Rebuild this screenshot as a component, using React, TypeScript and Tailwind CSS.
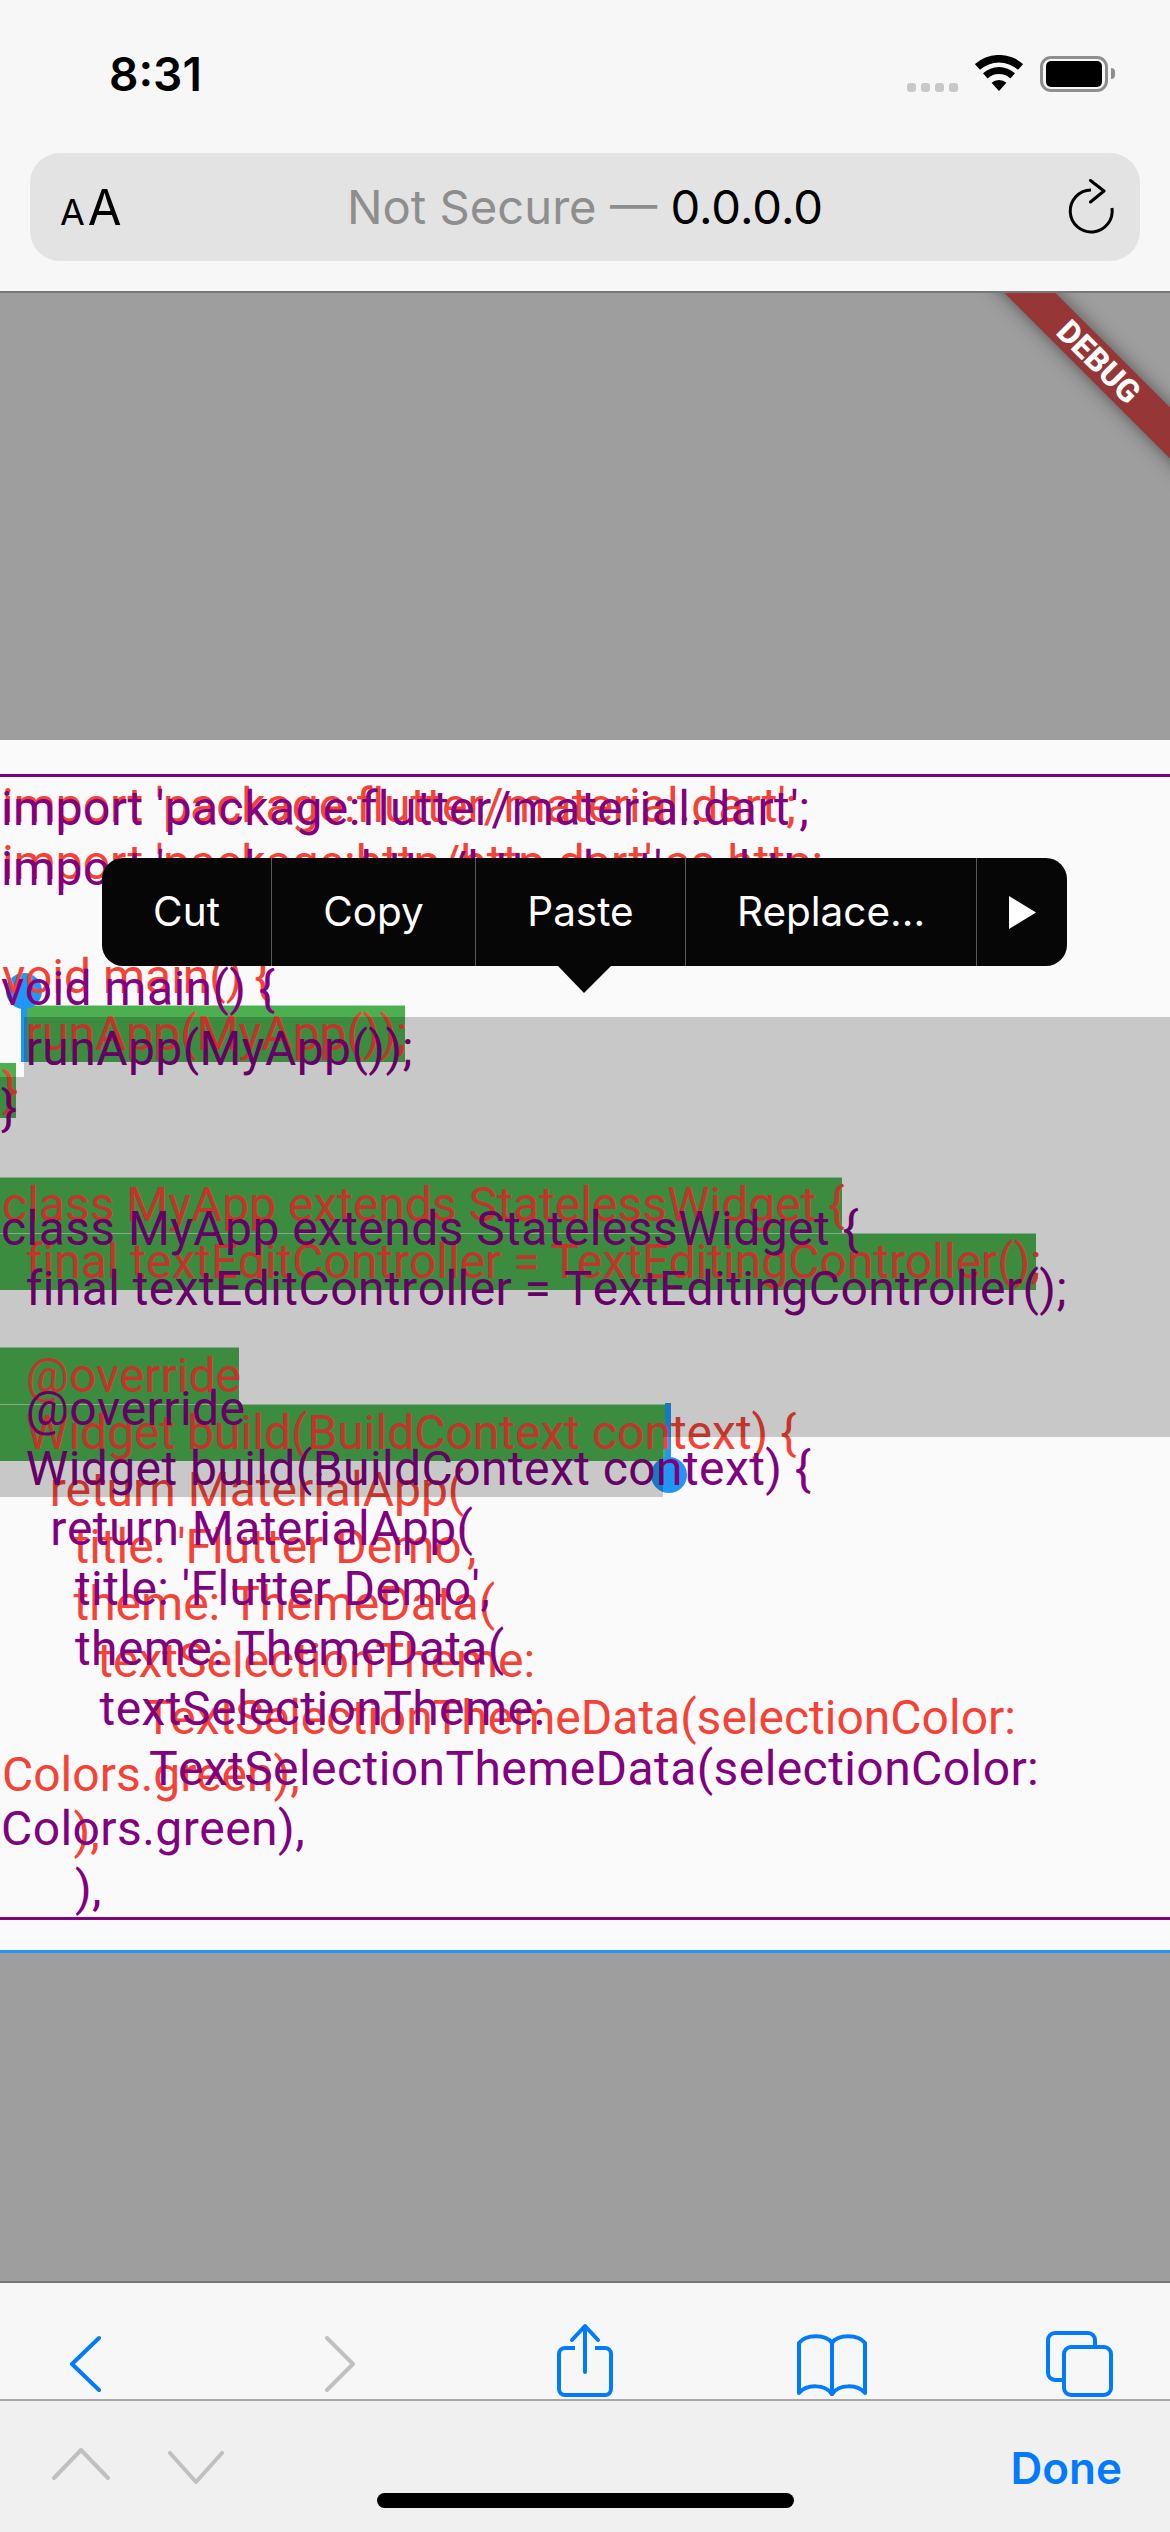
import React from "react";

// the same source is painted twice, the red copy sits under the purple one
const codeLines = [
  "import 'package:flutter/material.dart';",
  "import 'package:http/http.dart' as http;",
  " ",
  "void main() {",
  "  runApp(MyApp());",
  "}",
  " ",
  "class MyApp extends StatelessWidget {",
  "  final textEditController = TextEditingController();",
  " ",
  "  @override",
  "  Widget build(BuildContext context) {",
  "    return MaterialApp(",
  "      title: 'Flutter Demo',",
  "      theme: ThemeData(",
  "        textSelectionTheme:",
  "            TextSelectionThemeData(selectionColor:",
  "Colors.green),",
  "      ),"
];

const CodeLines: React.FC<{ className: string }> = ({ className }) => (
  <div className={className}>
    {codeLines.map((line, i) => (
      <div key={i} className="whitespace-pre">
        {line}
      </div>
    ))}
  </div>
);

const StatusBar = () => (
  <div className="flex h-[153px] items-end justify-between pb-[61px] pl-[109px] pr-[55px]">
    <span className="text-[46px] leading-[36px] font-semibold text-black [font-family:Inter,sans-serif]">
      8:31
    </span>
    <div className="flex items-end">
      <div className="flex gap-[5px]">
        <div className="h-[9px] w-[9px] rounded-[3px] bg-[#c8c8c8]" />
        <div className="h-[9px] w-[9px] rounded-[3px] bg-[#c8c8c8]" />
        <div className="h-[9px] w-[9px] rounded-[3px] bg-[#c8c8c8]" />
        <div className="h-[9px] w-[9px] rounded-[3px] bg-[#c8c8c8]" />
      </div>
      <svg className="ml-[17px] mb-[1px]" width="48" height="36" viewBox="0 0 48 36">
        <path d="M-0.1 9.2A36 36 0 0 1 48.1 9.2L43 14.8A28.5 28.5 0 0 0 5 14.8Z" />
        <path d="M8 18.2A24 24 0 0 1 40 18.2L35.4 23.4A17 17 0 0 0 12.6 23.4Z" />
        <path d="M16.6 27.8A11 11 0 0 1 31.4 27.8L24 36Z" />
      </svg>
      <div className="ml-[17px] flex h-[36px] w-[68px] items-center justify-center rounded-[11px] border-[3px] border-[#8e8e8e]">
        <div className="h-[26px] w-[56px] rounded-[5px] bg-black" />
      </div>
      <div className="mb-[13px] ml-[3px] h-[11px] w-[4px] rounded-r-[4px] bg-[#8e8e8e]" />
    </div>
  </div>
);

const AddressBar = () => (
  <div className="mx-[30px] grid h-[108px] grid-cols-[1fr_auto_1fr] items-center rounded-[30px] bg-[#e3e3e3] px-[27px] [font-family:Inter,sans-serif]">
    <div className="ml-[3px] flex items-baseline text-black">
      <span className="text-[36px] leading-none">A</span>
      <span className="ml-[3px] text-[49px] leading-none">A</span>
    </div>
    <div className="whitespace-pre text-[47.2px] leading-none text-[#8e8e8e]">
      Not Secure — <span className="text-black">0.0.0.0</span>
    </div>
    <svg className="-mr-[2px] justify-self-end" width="47" height="56" viewBox="0 0 47 56" fill="none" stroke="#000" strokeWidth="3">
      <path d="M23 11A21 21 0 1 0 44 29" />
      <path d="M22.5 1.5L36 12L22.5 23" strokeLinecap="round" strokeLinejoin="round" />
    </svg>
  </div>
);

const SelectionMenu = () => (
  <div className="absolute left-[102px] top-[118px] z-30 flex h-[108px] w-[965px] rounded-[21px] bg-[#060606] text-[40.5px] text-white [font-family:Inter,sans-serif]">
    <div className="flex w-[170px] items-center justify-center border-r border-[#5a5a5a]">Cut</div>
    <div className="flex w-[204px] items-center justify-center border-r border-[#5a5a5a]">Copy</div>
    <div className="flex w-[210px] items-center justify-center border-r border-[#5a5a5a]">Paste</div>
    <div className="flex w-[291px] items-center justify-center border-r border-[#5a5a5a]">Replace...</div>
    <div className="flex flex-1 items-center justify-center">
      <svg width="27" height="33" viewBox="0 0 27 33">
        <polygon points="0,0 27,16.5 0,33" fill="#fff" />
      </svg>
    </div>
    <svg className="absolute left-[456px] top-full" width="53" height="27" viewBox="0 0 53 27">
      <polygon points="0,0 53,0 26,27" fill="#060606" />
    </svg>
  </div>
);

const CodeEditor = () => (
  <section className="relative h-[1213px] overflow-hidden bg-[#fafafa] pt-[34px] text-[48px] [font-family:Roboto,sans-serif] [font-variant-ligatures:none]">
    {/* green selection of the red copy */}
    <div className="absolute left-[24px] top-[265px] h-[57px] w-[381px] border-t border-white/50 bg-[#4caf50]" />
    <div className="absolute left-0 top-[323px] h-[55px] w-[16px] bg-[#4caf50]" />
    <div className="absolute left-0 top-[437px] h-[56px] w-[842px] border-t border-white/50 bg-[#4caf50]" />
    <div className="absolute left-0 top-[493px] h-[57px] w-[1036px] border-t border-white/50 bg-[#4caf50]" />
    <div className="absolute left-0 top-[607px] h-[57px] w-[239px] border-t border-white/50 bg-[#4caf50]" />
    <div className="absolute left-0 top-[664px] h-[57px] w-[665px] border-t border-white/50 bg-[#4caf50]" />

    {/* handles */}
    <div className="absolute left-[6px] top-[233px] h-[36px] w-[36px] rounded-full bg-[#2196f3]" />
    <div className="absolute left-[21px] top-[265px] h-[57px] w-[6px] bg-[#2196f3]" />
    <div className="absolute left-[665px] top-[663px] h-[60px] w-[6px] bg-[#2196f3]" />
    <div className="absolute left-[651px] top-[717px] h-[36px] w-[36px] rounded-full bg-[#2196f3]" />

    <CodeLines className="absolute left-[2px] top-[37px] leading-[57px] text-[#f44336]" />

    <div className="relative z-10 h-[1146px] border-y-[3px] border-[#800080]">
      <CodeLines className="pl-[1px] pt-[2px] leading-[60px] tracking-[0.42px] text-[#800080] [font-kerning:none]" />
    </div>
    <div className="mt-[30px] h-[3px] bg-[#2196f3]" />

    {/* system selection darkens everything under it */}
    <div className="absolute left-[24px] right-0 top-[277px] z-20 h-[60px] bg-black/20" />
    <div className="absolute inset-x-0 top-[337px] z-20 h-[360px] bg-black/20" />
    <div className="absolute left-0 top-[697px] z-20 h-[60px] w-[663px] bg-black/20" />

    <SelectionMenu />
  </section>
);

const BrowserToolbar = () => (
  <div className="flex h-[118px] border-b-[2px] border-[#a8a8a8] bg-[#f7f7f7] pl-[70px]">
    <svg className="mt-[52px]" width="32" height="58" viewBox="0 0 32 58" fill="none" stroke="#007aff" strokeWidth="4" strokeLinecap="round" strokeLinejoin="round">
      <path d="M29 3L2 29L29 55" />
    </svg>
    <svg className="ml-[222px] mt-[52px]" width="32" height="58" viewBox="0 0 32 58" fill="none" stroke="#c0c0c0" strokeWidth="4" strokeLinecap="round" strokeLinejoin="round">
      <path d="M3 3L29 29L3 55" />
    </svg>
    <svg className="ml-[199px] mt-[39px]" width="60" height="78" viewBox="0 0 60 78" fill="none" stroke="#007aff" strokeWidth="4" strokeLinecap="round" strokeLinejoin="round">
      <path d="M20 26H10A6 6 0 0 0 4 32V67A6 6 0 0 0 10 73H50A6 6 0 0 0 56 67V32A6 6 0 0 0 50 26H40" strokeLinecap="butt" />
      <path d="M30 5V50" />
      <path d="M17 18L30 4L43 18" />
    </svg>
    <svg className="ml-[181px] mt-[49px]" width="72" height="66" viewBox="0 0 72 66" fill="none" stroke="#007aff" strokeWidth="4" strokeLinecap="round" strokeLinejoin="round">
      <path d="M36 11C30 2 10 2 3 11V61C11 52 29 52 36 62" />
      <path d="M36 11C42 2 62 2 69 11V61C61 52 43 52 36 62" />
      <path d="M36 11V62" />
    </svg>
    <svg className="ml-[177px] mt-[45px]" width="70" height="72" viewBox="0 0 70 72" fill="none" stroke="#007aff" strokeWidth="4">
      <path d="M50 19V12A7 7 0 0 0 43 5H10A7 7 0 0 0 3 12V45A7 7 0 0 0 10 52H19" />
      <rect x="19" y="19" width="47" height="48" rx="7" />
    </svg>
  </div>
);

const FindBar = () => (
  <div className="relative flex h-[131px] items-start bg-[#f0f0f0] pl-[52px] pr-[48px]">
    <svg className="mt-[47px]" width="58" height="32" viewBox="0 0 58 32" fill="none" stroke="#c0c0c0" strokeWidth="4" strokeLinecap="round" strokeLinejoin="round">
      <path d="M2 30L29 2L56 30" />
    </svg>
    <svg className="ml-[58px] mt-[50px]" width="56" height="33" viewBox="0 0 56 33" fill="none" stroke="#c0c0c0" strokeWidth="4" strokeLinecap="round" strokeLinejoin="round">
      <path d="M2 2L28 31L54 2" />
    </svg>
    <span className="ml-auto mt-[45px] text-[44px] leading-[44px] font-semibold text-[#007aff] [font-family:Inter,sans-serif]">
      Done
    </span>
    <div className="absolute bottom-[24px] left-[377px] h-[15px] w-[417px] rounded-full bg-black" />
  </div>
);

export default function App() {
  return (
    <div className="flex h-[2532px] w-[1170px] flex-col overflow-hidden">
      <header className="h-[291px] bg-[#f7f7f7]">
        <StatusBar />
        <AddressBar />
      </header>
      <div className="relative h-[449px] overflow-hidden border-t-2 border-[#777] bg-[#9e9e9e]">
        <div className="absolute left-[897px] top-[49px] flex h-[36px] w-[400px] rotate-45 items-center justify-center bg-[#963637] pl-[5px] text-[32px] leading-none font-extrabold text-white shadow-[0_0_18px_rgba(0,0,0,0.5)] [font-family:Roboto,sans-serif]">
          DEBUG
        </div>
      </div>
      <CodeEditor />
      <div className="h-[330px] border-b-2 border-[#777] bg-[#9e9e9e]" />
      <BrowserToolbar />
      <FindBar />
    </div>
  );
}
